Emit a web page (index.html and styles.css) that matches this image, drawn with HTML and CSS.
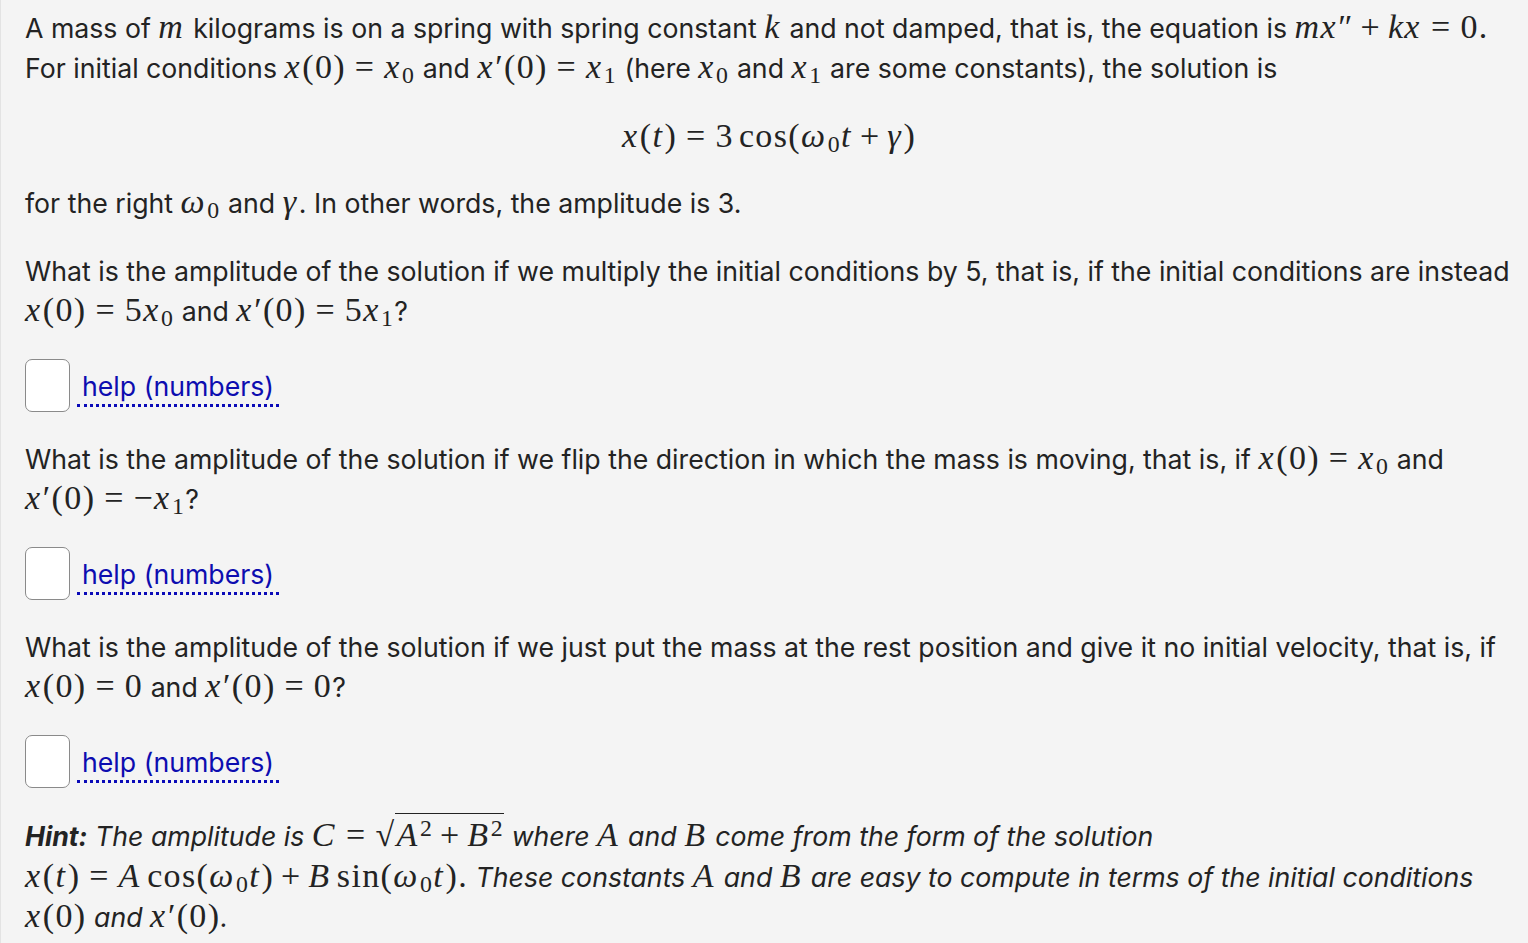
FILE: index.html
```html
<!DOCTYPE html>
<html>
<head>
<meta charset="utf-8">
<link rel="stylesheet" href="styles.css">
</head>
<body>
<div class="page">
  <p class="para">A mass of <span class="m"><i>m</i></span> kilograms is on a spring with spring constant <span class="m"><i>k</i></span> and not damped, that is, the equation is <span class="m"><i>mx</i>″<span class="bin">+</span><i>kx</i><span class="rel">=</span>0.</span><br>For initial conditions <span class="m"><i>x</i>(0)<span class="rel">=</span><i>x</i><sub>0</sub></span> and <span class="m"><i>x</i>′(0)<span class="rel">=</span><i>x</i><sub>1</sub></span> (here <span class="m"><i>x</i><sub>0</sub></span> and <span class="m"><i>x</i><sub>1</sub></span> are some constants), the solution is</p>
  <div class="display"><span class="m"><i>x</i>(<i>t</i>)<span class="rel">=</span>3<span class="thin"></span>cos(<i>ω</i><sub>0</sub><i>t</i><span class="bin">+</span><i>γ</i>)</span></div>
  <p class="para">for the right <span class="m"><i>ω</i><sub>0</sub></span> and <span class="m"><i>γ</i></span>. In other words, the amplitude is 3.</p>

  <p class="para q">What is the amplitude of the solution if we multiply the initial conditions by 5, that is, if the initial conditions are instead <span class="m"><i>x</i>(0)<span class="rel">=</span>5<i>x</i><sub>0</sub></span> and <span class="m"><i>x</i>′(0)<span class="rel">=</span>5<i>x</i><sub>1</sub></span>?</p>
  <div class="answer"><span class="box"></span><a class="help" href="#">help (numbers)</a></div>

  <p class="para q">What is the amplitude of the solution if we flip the direction in which the mass is moving, that is, if <span class="m"><i>x</i>(0)<span class="rel">=</span><i>x</i><sub>0</sub></span> and <span class="m"><i>x</i>′(0)<span class="rel">=</span>−<i>x</i><sub>1</sub></span>?</p>
  <div class="answer"><span class="box"></span><a class="help" href="#">help (numbers)</a></div>

  <p class="para q">What is the amplitude of the solution if we just put the mass at the rest position and give it no initial velocity, that is, if <span class="m"><i>x</i>(0)<span class="rel">=</span>0</span> and <span class="m"><i>x</i>′(0)<span class="rel">=</span>0</span>?</p>
  <div class="answer"><span class="box"></span><a class="help" href="#">help (numbers)</a></div>

  <p class="para hint"><b>Hint:</b> The amplitude is <span class="m"><i>C</i><span class="rel">=</span>√<span class="rad"><i>A</i><sup>2</sup><span class="bin">+</span><i>B</i><sup>2</sup></span></span> where <span class="m"><i>A</i></span> and <span class="m"><i>B</i></span> come from the form of the solution <span class="m"><i>x</i>(<i>t</i>)<span class="rel">=</span><i>A</i><span class="thin"></span>cos(<i>ω</i><sub>0</sub><i>t</i>)<span class="bin">+</span><i>B</i><span class="thin"></span>sin(<i>ω</i><sub>0</sub><i>t</i>).</span> These constants <span class="m"><i>A</i></span> and <span class="m"><i>B</i></span> are easy to compute in terms of the initial conditions <span class="m"><i>x</i>(0)</span> and <span class="m"><i>x</i>′(0)</span>.</p>
</div>
</body>
</html>
```
FILE: styles.css
```css
html, body {
  margin: 0;
  padding: 0;
  background: #f4f4f4;
}
.page {
  min-height: 943px;
  box-sizing: border-box;
  border-left: 1px solid #e3e3e3;
  padding: 8px 15px 0 24px;
  font-family: Inter, "Liberation Sans", sans-serif;
  font-size: 26.7px;
  line-height: 40px;
  color: #232323;
}
.para {
  margin: 0;
}
.q {
  margin-top: 28px;
}
.display {
  text-align: center;
  margin: 29px 0 26px;
  height: 40px;
  line-height: 40px;
}
.m {
  font-family: "Liberation Serif", "DejaVu Serif", serif;
  font-size: 34px;
  letter-spacing: 0.04em;
  line-height: 1;
  font-style: normal;
  white-space: nowrap;
}
.m i {
  font-style: italic;
  padding-right: 0.04em;
}
.rel {
  margin: 0 0.26em;
}
.bin {
  margin: 0 0.2em;
}
.thin {
  display: inline-block;
  width: 0.15em;
}
.m sub, .m sup {
  font-size: 0.7em;
  font-style: normal;
  line-height: 0;
}
.m sub {
  vertical-align: -0.2em;
}
.m sup {
  vertical-align: 0.42em;
}
.rad {
  border-top: 1.5px solid #232323;
  padding: 2px 0 0 1px;
}
.answer {
  display: flex;
  align-items: center;
  margin-top: 28px;
  height: 53px;
}
.answer + .q {
  margin-top: 27px;
}
.box {
  display: block;
  box-sizing: border-box;
  width: 45px;
  height: 53px;
  background: #fff;
  border: 1.5px solid #8a8a8a;
  border-radius: 7px;
}
.help {
  margin-left: 7px;
  margin-top: 6px;
  padding: 0 5px 3px 5px;
  color: #0d0db0;
  text-decoration: none;
  line-height: 30px;
  border-bottom: 3px dotted #0a0ab8;
}
.hint {
  margin-top: 28px;
  font-style: italic;
  line-height: 40.5px;
}
.hint b {
  font-weight: 700;
}
```
